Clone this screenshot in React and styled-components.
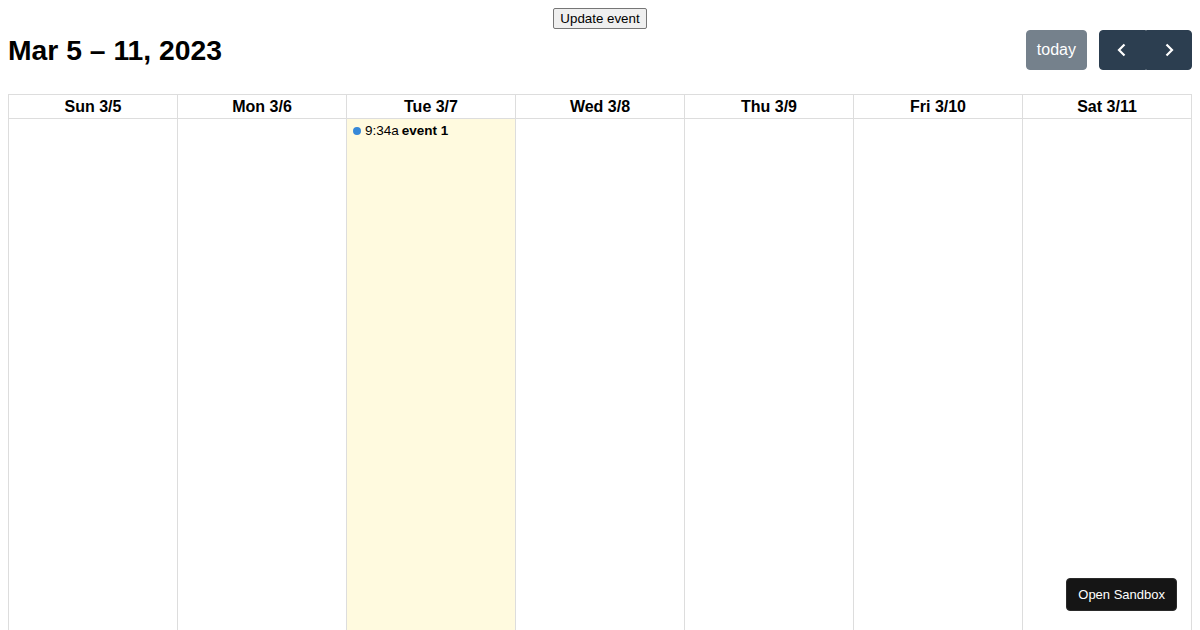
import styled, { createGlobalStyle } from "styled-components";

const GlobalStyle = createGlobalStyle`
  html, body {
    height: 630px;
    overflow: hidden;
  }
  body {
    margin: 8px;
    font-family: "Liberation Sans", Arial, sans-serif;
    background: #fff;
  }
`;

const TopBar = styled.div`
  text-align: center;
  height: 22px;
`;

const UpdateButton = styled.button`
  font-family: "Liberation Sans", Arial, sans-serif;
  font-size: 13.33px;
  height: 21px;
  padding: 1px 6px;
  color: #000;
  background: #efefef;
  border: 1px solid #767676;
  border-radius: 2px;
`;

const Toolbar = styled.div`
  display: flex;
  justify-content: space-between;
  align-items: center;
  margin-bottom: 24px;
`;

const Title = styled.h2`
  margin: 0;
  font-size: 28.3px;
  font-weight: bold;
  color: #000;
`;

const Actions = styled.div`
  display: flex;
  gap: 12px;
`;

const FcButton = styled.button`
  display: flex;
  align-items: center;
  justify-content: center;
  height: 40px;
  padding: 0 ${(p) => p.$pad || 10}px;
  font-family: "Liberation Sans", Arial, sans-serif;
  font-size: 16px;
  color: #fff;
  background: #2c3e50;
  border: 1px solid #2c3e50;
  border-radius: ${(p) => p.$radius || "4px"};
  opacity: ${(p) => (p.disabled ? 0.65 : 1)};
`;

const Group = styled.div`
  display: flex;
`;

const Table = styled.div`
  display: grid;
  grid-template-columns: repeat(7, 1fr);
  border-top: 1px solid #ddd;
  border-left: 1px solid #ddd;
`;

const HeadCell = styled.div`
  border-right: 1px solid #ddd;
  border-bottom: 1px solid #ddd;
  padding: 2px 4px;
  height: 19px;
  text-align: center;
  font-weight: bold;
  font-size: 16px;
  line-height: 19px;
  color: #000;
`;

const DayCell = styled.div`
  border-right: 1px solid #ddd;
  height: 516px;
  background: ${(p) => (p.$today ? "rgba(255, 220, 40, 0.15)" : "#fff")};
  padding-top: 4px;
`;

const Event = styled.div`
  display: flex;
  align-items: center;
  margin: 0 2px;
  font-size: 13.5px;
  color: #000;
  white-space: nowrap;
`;

const Dot = styled.span`
  box-sizing: content-box;
  width: 0;
  height: 0;
  border: 4px solid #3788d8;
  border-radius: 4px;
  margin: 0 4px;
`;

const EventTitle = styled.span`
  font-weight: bold;
  margin-left: 3px;
`;

const SandboxButton = styled.button`
  position: fixed;
  right: 23px;
  bottom: 19px;
  height: 33px;
  padding: 0 11px;
  font-family: "Liberation Sans", Arial, sans-serif;
  font-size: 13px;
  color: #fff;
  background: #151515;
  border: 1px solid #2a2a2a;
  border-radius: 4px;
`;

const Chevron = ({ left }) => (
  <svg width="16" height="16" viewBox="0 0 16 16">
    <path
      d={left ? "M10.5 2.5 L5 8 L10.5 13.5" : "M5.5 2.5 L11 8 L5.5 13.5"}
      fill="none"
      stroke="#fff"
      strokeWidth="2.2"
    />
  </svg>
);

const days = ["Sun 3/5", "Mon 3/6", "Tue 3/7", "Wed 3/8", "Thu 3/9", "Fri 3/10", "Sat 3/11"];

export default function App() {
  return (
    <>
      <GlobalStyle />
      <TopBar>
        <UpdateButton>Update event</UpdateButton>
      </TopBar>
      <Toolbar>
        <Title>Mar 5 – 11, 2023</Title>
        <Actions>
          <FcButton disabled $pad={10}>today</FcButton>
          <Group>
            <FcButton $pad={14.25} $radius="4px 0 0 4px">
              <Chevron left />
            </FcButton>
            <FcButton $pad={14.25} $radius="0 4px 4px 0">
              <Chevron />
            </FcButton>
          </Group>
        </Actions>
      </Toolbar>
      <Table>
        {days.map((d) => (
          <HeadCell key={d}>{d}</HeadCell>
        ))}
        {days.map((d, i) => (
          <DayCell key={d} $today={i === 2}>
            {i === 2 && (
              <Event>
                <Dot />
                9:34a
                <EventTitle>event 1</EventTitle>
              </Event>
            )}
          </DayCell>
        ))}
      </Table>
      <SandboxButton>Open Sandbox</SandboxButton>
    </>
  );
}
